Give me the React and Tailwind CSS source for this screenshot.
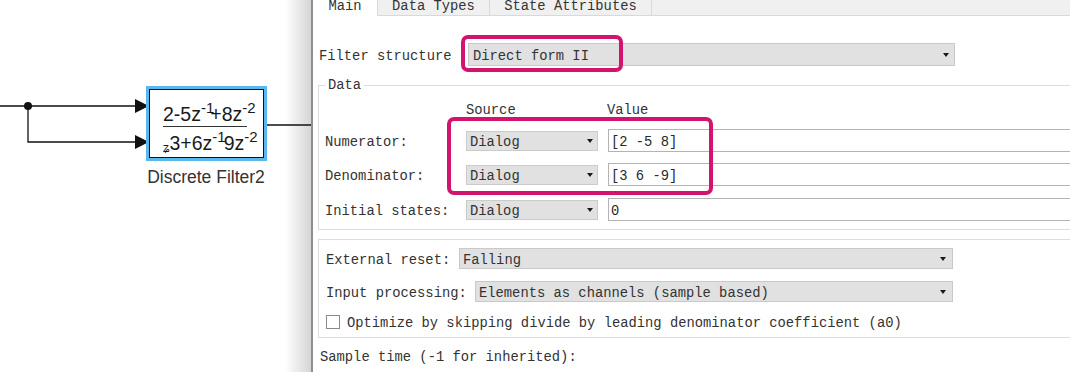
import React from "react";

const Arrow = () => (
  <span className="w-0 h-0 border-x-[3.5px] border-x-transparent border-t-[4px] border-t-[#1a1a1a]" />
);

const T = ({ children, className = "" }) => (
  <span className={`pt-[4px] leading-[16px] whitespace-pre ${className}`}>{children}</span>
);

const Select = ({ w, h, text, pl = "pl-[3px]", pr = "pr-[5px]" }) => (
  <div
    className={`flex items-center justify-between ${w} ${h} ${pl} ${pr} bg-[#e1e1e1] border border-[#c9c9c9] text-[#333]`}
  >
    <T>{text}</T>
    <Arrow />
  </div>
);

const DataRow = ({ label, value, mt }) => (
  <div className={`flex items-center h-[23px] ${mt}`}>
    <T className="w-[141px]">{label}</T>
    <div className="flex items-center justify-between w-[132px] h-[20px] pl-[3px] pr-[4px] bg-[#e1e1e1] border border-[#cbcbcb]">
      <T>Dialog</T>
      <Arrow />
    </div>
    <div className="ml-[10px] flex-1 h-[23px] flex items-center pl-[2px] bg-white border border-[#b3b3b3]">
      <T className="text-[#2a2a2a]">{value}</T>
    </div>
  </div>
);

export default function App() {
  return (
    <div className="relative flex w-[1070px] h-[372px] overflow-hidden bg-white font-['Liberation_Mono',monospace]">
      {/* Simulink canvas */}
      <div className="relative w-[311px] shrink-0 h-full bg-white">
        <div className="absolute right-0 top-0 h-full w-[26px] bg-linear-to-r from-white/0 to-[#d5d5d5]" />
        <svg className="absolute left-0 top-0" width="311" height="372" viewBox="0 0 311 372">
          <g stroke="#111" strokeWidth="1.3" fill="none">
            <line x1="0" y1="106" x2="138" y2="106" />
            <polyline points="28,106 28,142 138,142" />
            <line x1="263" y1="125" x2="311" y2="125" />
          </g>
          <circle cx="28" cy="106" r="4" fill="#111" />
          <polygon points="135,99 149,106 135,113" fill="#111" />
          <polygon points="135,135 149,142 135,149" fill="#111" />
        </svg>
        <div className="absolute left-[146px] top-[86px] w-[121px] h-[75px] border-[3px] border-[#5ab8ee] bg-[#bfe4f9]">
          <div className="w-full h-full border-[1.5px] border-[#111] bg-white font-['Liberation_Sans',Arial,sans-serif] text-[#1a1a1a]">
            <div className="pl-[13px] pt-[14px] flex flex-col items-start">
              <div className="text-[19.5px] leading-[20px] whitespace-pre">
                2-5z<span className="relative top-[-8px] text-[15px]">-1</span>
                <span className="ml-[-4px]">+8z</span>
                <span className="relative top-[-8px] text-[15px]">-2</span>
              </div>
              <div className="w-[84px] h-[1.4px] bg-[#333]" />
              <div className="mt-[6px] text-[19.5px] leading-[20px] whitespace-pre">
                <span className="text-[12px] relative top-[2px]">ʑ</span>3+6z
                <span className="relative top-[-8px] text-[15px]">-1</span>
                <span className="ml-[-2px]">9z</span>
                <span className="relative top-[-8px] text-[15px]">-2</span>
              </div>
            </div>
          </div>
        </div>
        <div className="absolute left-[140px] top-[167px] w-[132px] text-center text-[17.5px] leading-[20px] text-[#333] font-['Liberation_Sans',Arial,sans-serif] whitespace-nowrap">
          Discrete Filter2
        </div>
      </div>

      {/* Dialog */}
      <div className="flex-1 min-w-0 flex flex-col border-l-2 border-[#8f8f8f] text-[13.8px] text-[#333]">
        {/* Tabs */}
        <div className="flex h-[16px] shrink-0 bg-[#f0f0f0]">
          <div className="w-[65px] h-full bg-white border-r border-[#d9d9d9] flex justify-center leading-[13px]">Main</div>
          <div className="w-[112px] h-full border-r border-b border-[#d9d9d9] flex justify-center leading-[13px]">Data Types</div>
          <div className="w-[162px] h-full border-r border-b border-[#d9d9d9] flex justify-center leading-[13px]">State Attributes</div>
          <div className="flex-1 h-full border-b border-[#d9d9d9]" />
        </div>

        <div className="flex flex-col pl-[5px]">
          {/* Filter structure */}
          <div className="flex items-center h-[23px] mt-[27px]">
            <T className="ml-[1px] w-[149px]">Filter structure</T>
            <Select w="w-[487px]" h="h-[23px]" text="Direct form II" pl="pl-[4px]" pr="pr-[5px]" />
          </div>

          {/* Data group */}
          <div className="relative mt-[19px] w-[800px] h-[145px] border-t border-l border-b border-[#dcdcdc]">
            <span className="absolute left-[6px] top-[-8px] px-[3px] bg-white leading-[16px]">Data</span>
            <div className="flex flex-col pl-[6px]">
              <div className="flex h-[16px] mt-[17px] leading-[16px]">
                <span className="w-[141px]" />
                <span className="w-[141px]">Source</span>
                <span>Value</span>
              </div>
              <DataRow label="Numerator:" value="[2 -5 8]" mt="mt-[10px]" />
              <DataRow label="Denominator:" value="[3 6 -9]" mt="mt-[11px]" />
              <DataRow label="Initial states:" value="0" mt="mt-[12px]" />
            </div>
          </div>

          {/* Second group */}
          <div className="mt-[9px] w-[800px] h-[99px] border-t border-l border-b border-[#dcdcdc] flex flex-col pl-[7px]">
            <div className="flex items-center h-[21px] mt-[8px]">
              <T className="w-[133px]">External reset:</T>
              <Select w="w-[494px]" h="h-[21px]" text="Falling" pl="pl-[3px]" pr="pr-[6px]" />
            </div>
            <div className="flex items-center h-[21px] mt-[12px]">
              <T className="w-[149px]">Input processing:</T>
              <Select w="w-[478px]" h="h-[21px]" text="Elements as channels (sample based)" pl="pl-[3px]" pr="pr-[6px]" />
            </div>
            <div className="flex items-center h-[14px] mt-[13px]">
              <span className="w-[14px] h-[14px] border border-[#8a8a8a] bg-white" />
              <T className="ml-[7px]">Optimize by skipping divide by leading denominator coefficient (a0)</T>
            </div>
          </div>

          <div className="mt-[12px] ml-[2px] leading-[16px]">Sample time (-1 for inherited):</div>
        </div>
      </div>

      {/* Highlight rectangles */}
      <div className="absolute left-[461px] top-[35px] w-[162px] h-[37px] border-[4px] border-[#d3146f] rounded-[7px]" />
      <div className="absolute left-[447px] top-[117px] w-[266px] h-[78px] border-[4px] border-[#d3146f] rounded-[7px]" />
    </div>
  );
}
